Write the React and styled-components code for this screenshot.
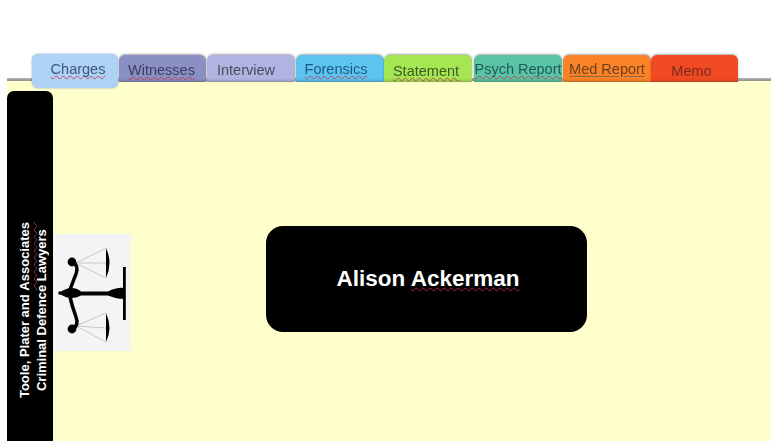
import styled, { createGlobalStyle } from 'styled-components';

const GlobalStyle = createGlobalStyle`
  html, body {
    margin: 0;
    padding: 0;
    background: #fff;
    overflow: hidden;
  }
  body {
    font-family: "Liberation Sans", Arial, sans-serif;
  }
`

const Slide = styled.div`
  width: 764px;
  height: 441px;
  margin-left: 7px;
  padding-top: 54px;
  box-sizing: border-box;
  filter: blur(0.3px);
`

const TabRow = styled.div`
  position: relative;
  z-index: 1;
  display: flex;
  align-items: flex-start;
  height: 27px;
  padding-left: 25px;
`

const Tab = styled.div`
  flex: none;
  box-sizing: border-box;
  width: ${({w})=>w}px;
  height: ${({active})=>active?'34px':'27px'};
  margin-right: ${({gap})=>gap||0}px;
  margin-top: ${({active})=>active?'0':'1px'};
  padding-top: ${({pad})=>pad}px;
  padding-left: ${({shift})=>shift>0?shift*2:0}px;
  padding-right: ${({shift})=>shift<0?-shift*2:0}px;
  background: ${({bg})=>bg};
  color: ${({color})=>color};
  font-size: 14.5px;
  line-height: 17px;
  text-align: center;
  white-space: nowrap;
  border-radius: ${({active})=>active?'6px':'6px 6px 0 0'};
  box-shadow: ${({active})=>active?'0 0 2px rgba(90,110,140,.7)':'0 -1px 2px rgba(70,70,80,.45), inset 0 -3px 3px -2px rgba(40,40,40,.35)'};
`

const Squiggle = styled.span`
  text-decoration: underline wavy rgba(201,48,74,.8) 0.7px;
  text-underline-offset: 1px;
  text-decoration-skip-ink: none;
`

const Dotted = styled.span`
  text-decoration: underline;
  text-decoration-color: #8a6a40;
  text-underline-offset: 2px;
`

const Rule = styled.div`
  height: 3px;
  background: linear-gradient(#b5b5b2, #8f8f8c);
  margin-top: -3px;
`

const Body = styled.div`
  display: flex;
  align-items: flex-start;
  height: 360px;
  padding-top: 10px;
  box-sizing: border-box;
  background: #ffffcc;
`

const Sidebar = styled.div`
  flex: none;
  box-sizing: border-box;
  width: 46px;
  height: 350px;
  padding: 0 0 43px 5px;
  display: flex;
  align-items: flex-end;
  justify-content: center;
  background: #000;
  border-radius: 7px 7px 0 0;
`

const SidebarText = styled.div`
  writing-mode: vertical-rl;
  transform: rotate(180deg);
  color: #fff;
  font-size: 13px;
  font-weight: bold;
  line-height: 17px;
  text-align: center;
  white-space: nowrap;
`

const LogoBox = styled.div`
  flex: none;
  width: 78px;
  height: 117px;
  margin-top: 143px;
  background: #f4f4f6;
`

const Nameplate = styled.div`
  flex: none;
  box-sizing: border-box;
  width: 321px;
  height: 106px;
  margin: 135px 0 0 135px;
  padding-left: 3px;
  display: flex;
  align-items: center;
  justify-content: center;
  background: #000;
  color: #fff;
  border-radius: 17px;
  font-size: 22.5px;
  font-weight: bold;
`

const tabs = [
  {w:86, gap:1, bg:'#aed2f5', color:'#3d5878', active:true, pad:7, shift:3, label:<Squiggle>Charges</Squiggle>},
  {w:87, gap:1, bg:'#8b90c4', color:'#3a3d62', pad:7, shift:-1, label:<Squiggle>Witnesses</Squiggle>},
  {w:88, gap:1, bg:'#b0b4e0', color:'#4a4c60', pad:7, shift:-5, label:'Interview'},
  {w:88, gap:0, bg:'#5cc4ee', color:'#1f5a80', pad:6, shift:-4, label:<Squiggle>Forensics</Squiggle>},
  {w:88, gap:2, bg:'#a5e653', color:'#3c5a24', pad:8, shift:-2, label:<Squiggle>Statement</Squiggle>},
  {w:88, gap:1, bg:'#58c4a4', color:'#1f5a58', pad:6, shift:0, label:<Squiggle>Psych Report</Squiggle>},
  {w:88, gap:0, bg:'#fb8226', color:'#6a4020', pad:6, shift:0, label:<Dotted>Med Report</Dotted>},
  {w:87, gap:0, bg:'#f14a22', color:'#7a2a20', pad:8, shift:-3, label:'Memo'},
]

// scales of justice, lying on its side
const Scales = () => (
  <svg width="78" height="117" viewBox="0 0 78 117">
    <g stroke="#bdbdbd" strokeWidth="0.8" fill="none">
      <path d="M23 29 L53 14 M23 29 L53 29 M23 29 L53 44"/>
      <path d="M23 92 L53 79 M23 92 L53 94 M23 92 L53 108"/>
    </g>
    <g fill="#000">
      <path d="M53 14 Q60 29 53 44 Z"/>
      <path d="M53 79 Q60 94 53 108 Z"/>
      <rect x="70" y="33" width="2.8" height="53"/>
      <path d="M24 57.5 L55 57.5 Q64 53 71 54 L71 65 Q64 65 55 61.5 L24 61.5 Z"/>
      <circle cx="7" cy="59" r="1.8"/>
      <path d="M7 58.5 Q13 54 18 54 Q25 54 28 58 L28 61 Q25 64 18 64 Q13 64 7 60 Z"/>
      <circle cx="19" cy="28" r="4.4"/>
      <circle cx="19" cy="95" r="4.4"/>
    </g>
    <g stroke="#000" fill="none" strokeWidth="3.5">
      <path d="M20 28 Q26 32 23 40 Q19 50 17 56"/>
      <path d="M20 95 Q26 91 23 83 Q19 72 17 63"/>
    </g>
  </svg>
)

const App = () => {
  return (
    <Slide>
      <GlobalStyle/>
      <TabRow>
        {tabs.map((tab,index)=>{
          return <Tab key={index} w={tab.w} gap={tab.gap} bg={tab.bg} color={tab.color} active={tab.active} pad={tab.pad} shift={tab.shift}>{tab.label}</Tab>
        })}
      </TabRow>
      <Rule/>
      <Body>
        <Sidebar>
          <SidebarText>
            Toole, Plater and <Squiggle>Associates</Squiggle><br/>Criminal Defence Lawyers
          </SidebarText>
        </Sidebar>
        <LogoBox><Scales/></LogoBox>
        <Nameplate>
          <span>Alison <Squiggle>Ackerman</Squiggle></span>
        </Nameplate>
      </Body>
    </Slide>
  )
}

export default App
